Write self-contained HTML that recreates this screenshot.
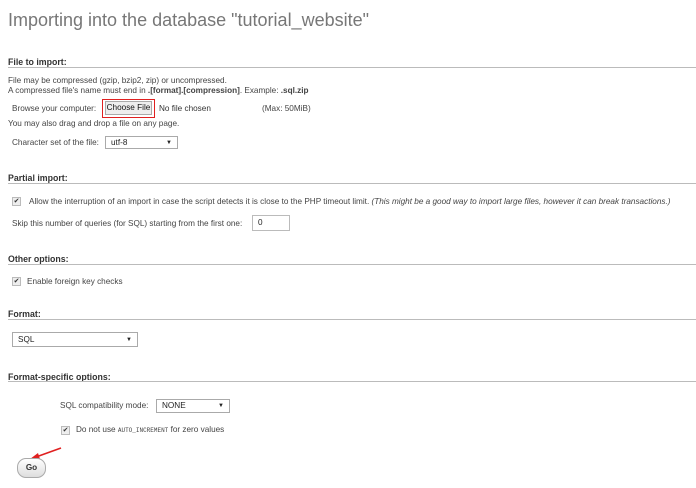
<!DOCTYPE html>
<html><head><style>
body{margin:0;width:696px;height:488px;background:#fff;font-family:"Liberation Sans",Arial,sans-serif;font-size:8.2px;color:#444;position:relative;overflow:hidden}
.a{position:absolute;white-space:nowrap}
h1{position:absolute;left:8px;top:10px;margin:0;font-weight:normal;font-size:18px;color:#777}
.h{position:absolute;left:8px;font-weight:bold;color:#333;font-size:8.8px}
.ln{position:absolute;left:8px;right:0;height:1px;background:#bbb}
.sel{position:absolute;border:1px solid #aaa;background:#fff;height:13px;box-sizing:border-box;padding-left:5px;line-height:12px;color:#222}
.sel:after{content:"▼";position:absolute;right:5px;top:0;font-size:6px}
.cb{position:absolute;width:7px;height:7px;border:1px solid #bbb;background:#eee;font-size:7px;line-height:7px;text-align:center;color:#333}
</style></head><body>
<h1>Importing into the database "tutorial_website"</h1>

<div class="h" style="top:57px">File to import:</div><div class="ln" style="top:67px"></div>
<div class="a" style="left:8px;top:76px">File may be compressed (gzip, bzip2, zip) or uncompressed.</div>
<div class="a" style="left:8px;top:86px">A compressed file's name must end in <b>.[format].[compression]</b>. Example: <b>.sql.zip</b></div>
<div class="a" style="left:12px;top:104px">Browse your computer:</div>
<div class="a" style="left:102px;top:99px;width:51px;height:17px;border:1.5px solid #e02020;"></div>
<div class="a" style="left:105px;top:101px;width:47px;height:14px;border:1px solid #aaa;box-sizing:border-box;background:#eee;color:#111;text-align:center;line-height:12px;font-size:8.2px">Choose File</div>
<div class="a" style="left:159px;top:104px;color:#333">No file chosen</div>
<div class="a" style="left:262px;top:104px">(Max: 50MiB)</div>
<div class="a" style="left:8px;top:119px">You may also drag and drop a file on any page.</div>
<div class="a" style="left:12px;top:138px">Character set of the file:</div>
<div class="sel" style="left:105px;top:136px;width:73px">utf-8</div>

<div class="h" style="top:173px">Partial import:</div><div class="ln" style="top:183px"></div>
<div class="cb" style="left:12px;top:197px">✔</div>
<div class="a" style="left:29px;top:197px">Allow the interruption of an import in case the script detects it is close to the PHP timeout limit. <i>(This might be a good way to import large files, however it can break transactions.)</i></div>
<div class="a" style="left:12px;top:219px">Skip this number of queries (for SQL) starting from the first one:</div>
<div class="a" style="left:252px;top:215px;width:38px;height:16px;border:1px solid #bbb;box-sizing:border-box;padding-left:5px;line-height:14px;color:#222">0</div>

<div class="h" style="top:254px">Other options:</div><div class="ln" style="top:264px"></div>
<div class="cb" style="left:12px;top:277px">✔</div>
<div class="a" style="left:27px;top:277px">Enable foreign key checks</div>

<div class="h" style="top:309px">Format:</div><div class="ln" style="top:319px"></div>
<div class="sel" style="left:12px;top:332px;width:126px;height:15px;line-height:14px">SQL</div>

<div class="h" style="top:372px">Format-specific options:</div><div class="ln" style="top:381px"></div>
<div class="a" style="left:60px;top:401px">SQL compatibility mode:</div>
<div class="sel" style="left:156px;top:399px;width:74px;height:14px">NONE</div>
<div class="cb" style="left:61px;top:426px">✔</div>
<div class="a" style="left:76px;top:425px">Do not use <span style="font-family:'Liberation Mono',monospace;font-size:6px">AUTO_INCREMENT</span> for zero values</div>

<svg class="a" style="left:0;top:440px" width="80" height="30"><line x1="61" y1="8" x2="36" y2="17" stroke="#e02020" stroke-width="1.6"/><polygon points="30,19 38,13 40,19" fill="#e02020"/></svg>
<div class="a" style="left:17px;top:458px;width:27px;height:18px;border:1px solid #aaa;border-radius:9px;background:linear-gradient(#fff,#ddd);text-align:center;line-height:18px;font-weight:bold;color:#333">Go</div>
</body></html>
